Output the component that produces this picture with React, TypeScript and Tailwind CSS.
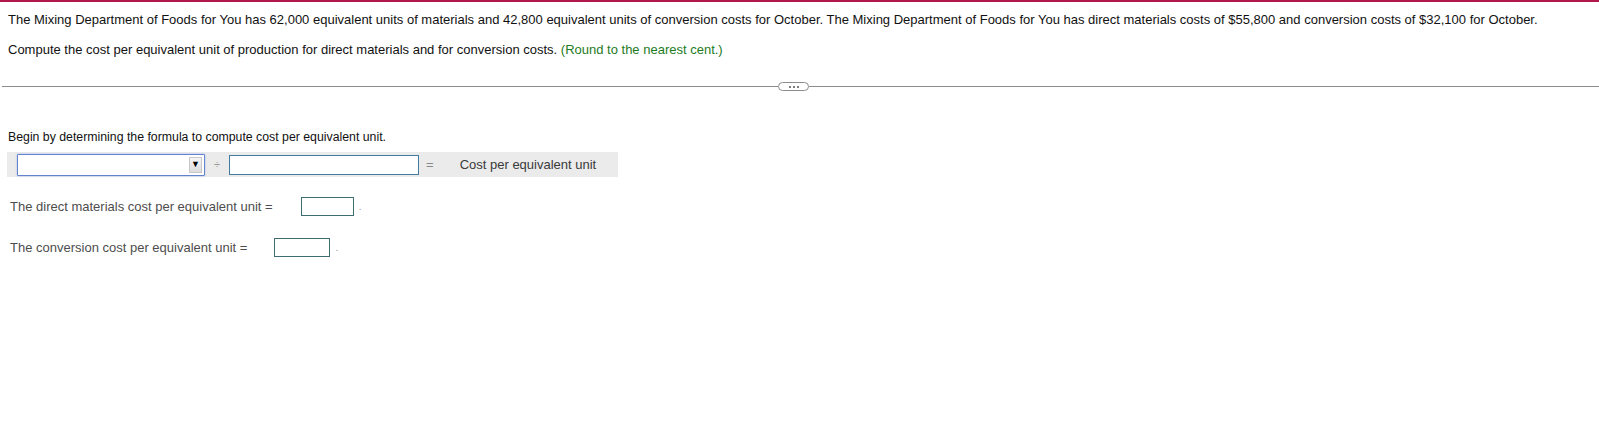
import { useState } from 'react';

export default function App() {
  const [numerator, setNumerator] = useState('');
  const [denominator, setDenominator] = useState('');
  const [dmCost, setDmCost] = useState('');
  const [ccCost, setCcCost] = useState('');

  return (
    <div className="min-h-screen bg-white font-['Liberation_Sans',Arial,sans-serif] text-[13px] leading-[15px]">
      <div className="h-[2px] bg-[#b0174c]" />

      <div className="px-[8px] pt-[10px] text-[#111]">
        <p>
          The Mixing Department of Foods for You has 62,000 equivalent units of materials and 42,800 equivalent units of
          conversion costs for October. The Mixing Department of Foods for You has direct materials costs of $55,800 and
          conversion costs of $32,100 for October.
        </p>
        <p className="mt-[15px]">
          Compute the cost per equivalent unit of production for direct materials and for conversion costs.{' '}
          <span className="text-[#1e7b1e]">(Round to the nearest cent.)</span>
        </p>
      </div>

      <div className="mt-[25px] flex items-center pl-[2px]">
        <div className="h-px w-[776px] bg-[#8c8c8c]" />
        <div className="flex h-[9px] w-[31px] items-center justify-center gap-[2px] rounded-full border border-[#8c8c8c] bg-white">
          <span className="h-[2px] w-[2px] rounded-full bg-[#555]" />
          <span className="h-[2px] w-[2px] rounded-full bg-[#555]" />
          <span className="h-[2px] w-[2px] rounded-full bg-[#555]" />
        </div>
        <div className="h-px flex-1 bg-[#8c8c8c]" />
      </div>

      <div className="px-[8px] pt-[39px] text-[#111]">
        <p className="text-[12.3px]">Begin by determining the formula to compute cost per equivalent unit.</p>

        <div className="mt-[7px] -ml-px flex h-[25px] w-[611px] items-center bg-[#ebebeb] pl-[10px]">
          <div className="flex h-[22px] w-[188px] items-center justify-end rounded-[1px] border border-[#6383cf] bg-white pr-[2px] shadow-[0_0_2px_#9fb4e6]">
            <input
              value={numerator}
              onChange={(e) => setNumerator(e.target.value)}
              className="h-full min-w-0 flex-1 bg-transparent outline-none"
            />
            <div className="flex h-[16px] w-[13px] items-center justify-center border border-[#c8c8c8] bg-gradient-to-b from-[#f6f6f6] to-[#dcdcdc] text-[9px] leading-none text-black">
              ▼
            </div>
          </div>
          <span className="mx-[9px] text-[11px] text-[#999]">÷</span>
          <input
            value={denominator}
            onChange={(e) => setDenominator(e.target.value)}
            className="h-[20px] w-[190px] border border-[#3f7ca0] bg-white outline-none"
          />
          <span className="ml-[7px] text-[#888]">=</span>
          <span className="ml-[26px] text-[#3a3a3a]">Cost per equivalent unit</span>
        </div>
      </div>

      <div className="px-[10px] pt-[20px] text-[#4d4d4d]">
        <div className="flex items-center">
          <span>The direct materials cost per equivalent unit =</span>
          <input
            value={dmCost}
            onChange={(e) => setDmCost(e.target.value)}
            className="ml-[28px] h-[19px] w-[53px] border border-[#3d6e72] bg-white outline-none"
          />
          <span className="ml-[5px] text-[10px] text-[#999]">.</span>
        </div>
        <div className="mt-[22px] flex items-center">
          <span>The conversion cost per equivalent unit =</span>
          <input
            value={ccCost}
            onChange={(e) => setCcCost(e.target.value)}
            className="ml-[27px] h-[19px] w-[56px] border border-[#3d6e72] bg-white outline-none"
          />
          <span className="ml-[5px] text-[10px] text-[#999]">.</span>
        </div>
      </div>
    </div>
  );
}
